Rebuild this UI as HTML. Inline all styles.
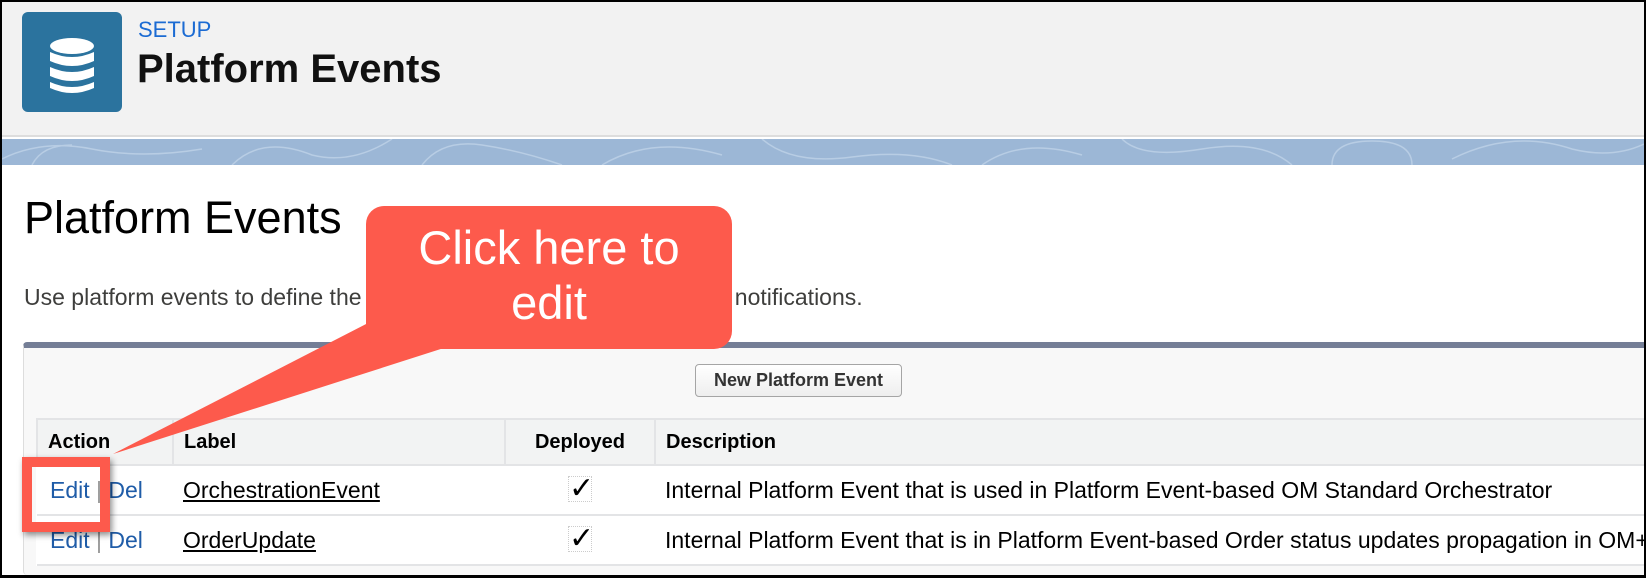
<!DOCTYPE html>
<html><head><meta charset="utf-8"><style>
*{margin:0;padding:0;box-sizing:border-box}
body{width:1646px;height:578px;overflow:hidden;background:#000;font-family:"Liberation Sans",Arial,sans-serif;position:relative}
.page{position:absolute;left:2px;top:2px;width:1642px;height:573px;background:#fff;overflow:hidden}
.hdr{position:absolute;left:0;top:0;width:100%;height:135px;background:#f2f2f2;border-bottom:2px solid #ddd}
.icon{position:absolute;left:20px;top:10px;width:100px;height:100px;background:#2b739e;border-radius:6px}
.setup{position:absolute;left:136px;top:15px;font-size:22px;color:#1b6bd3}
.title{position:absolute;left:135px;top:45px;font-size:40px;font-weight:bold;color:#111}
.band{position:absolute;left:0;top:137px;width:100%;height:26px;background:#9cb7d6}
.h1{position:absolute;left:22px;top:190px;font-size:45px;color:#000}
.desc{position:absolute;left:22px;top:282px;font-size:23px;color:#3e3e3c}
.box{position:absolute;left:21px;top:340px;width:1640px;height:233px;background:#f8f8f8;border-top:6px solid #747e96;border-left:1px solid #ddd;border-radius:4px 0 0 4px}
.btn{position:absolute;left:693px;top:362px;width:207px;height:33px;border:1px solid #a5a5a5;border-radius:4px;background:linear-gradient(#fff,#eee);font-size:18px;font-weight:bold;color:#333;text-align:center;line-height:31px}
table{position:absolute;left:34px;top:416px;width:1620px;border-collapse:collapse;background:#fff;font-size:23px}
th{background:#f2f3f3;height:46px;font-size:20px;text-align:left;padding-left:10px;border:2px solid #e3e4e6;color:#000}
td{height:50px;border-bottom:2px solid #e3e4e6;padding-left:10px;color:#000}
a{color:#1f5ca8;text-decoration:none}
u{color:#000}
.sep{color:#999}
.chk{display:inline-block;width:24px;height:26px;border:1px dotted #ccc;font-size:30px;line-height:24px;text-align:center;font-weight:bold;font-family:"DejaVu Sans",sans-serif}
.callout{position:absolute;left:364px;top:204px;width:366px;height:143px;background:#fd5a4c;border-radius:18px;color:#fff;font-size:47px;text-align:center;line-height:55px;padding-top:14px}
.rbox{position:absolute;left:20px;top:455px;width:88px;height:75px;border:10px solid #fd5a4c;box-shadow:2px 3px 6px rgba(0,0,0,.45)}
</style></head><body><div class="page">
<div class="hdr">
<div class="icon"><svg width="100" height="100" viewBox="0 0 100 100"><g fill="#fff"><ellipse cx="50" cy="34" rx="22" ry="8"/><path d="M28 40q22 10 44 0v9q-22 10-44 0z"/><path d="M28 55q22 10 44 0v9q-22 10-44 0z"/><path d="M28 70q22 10 44 0v6q-22 10-44 0z"/></g></svg></div>
<div class="setup">SETUP</div>
<div class="title">Platform Events</div>
</div>
<div class="band"><svg width="1642" height="26"><g fill="none" stroke="#b8cde4" stroke-width="1.5"><path d="M0 20q40-20 90-10t110 0"/><path d="M30 26q10-20 40-20"/><path d="M230 26q30-30 80-10 40 10 80-16"/><path d="M420 26q20-26 60-20t80 20"/><path d="M600 26q50-30 120-10"/><path d="M760 0q30 26 90 18t100 8"/><path d="M980 26q40-28 100-10"/><path d="M1120 0q20 20 80 10 60-10 90 16"/><path d="M1330 26q0-24 40-24t40 24"/><path d="M1450 20q60-30 120-10 40 10 72-5"/></g></svg></div>
<div class="h1">Platform Events</div>
<div class="desc">Use platform events to define the custom data of your real-time event notifications.</div>
<div class="box"></div>
<div class="btn">New Platform Event</div>
<table>
<tr><th style="width:136px">Action</th><th style="width:332px">Label</th><th style="width:150px;text-align:center;padding:0">Deployed</th><th>Description</th></tr>
<tr><td style="padding-left:13px"><a>Edit</a> <span class="sep">|</span> <a>Del</a></td><td><u>OrchestrationEvent</u></td><td style="text-align:center;padding:0"><span class="chk">✓</span></td><td>Internal Platform Event that is used in Platform Event-based OM Standard Orchestrator</td></tr>
<tr><td style="padding-left:13px"><a>Edit</a> <span class="sep">|</span> <a>Del</a></td><td><u>OrderUpdate</u></td><td style="text-align:center;padding:0"><span class="chk">✓</span></td><td>Internal Platform Event that is in Platform Event-based Order status updates propagation in OM+</td></tr>
</table>
<svg style="position:absolute;left:0;top:0" width="1642" height="573"><polygon points="368,320 445,345 111,452" fill="#fd5a4c"/></svg>
<div class="callout">Click here to<br>edit</div>
<div class="rbox"></div>
</div></body></html>
